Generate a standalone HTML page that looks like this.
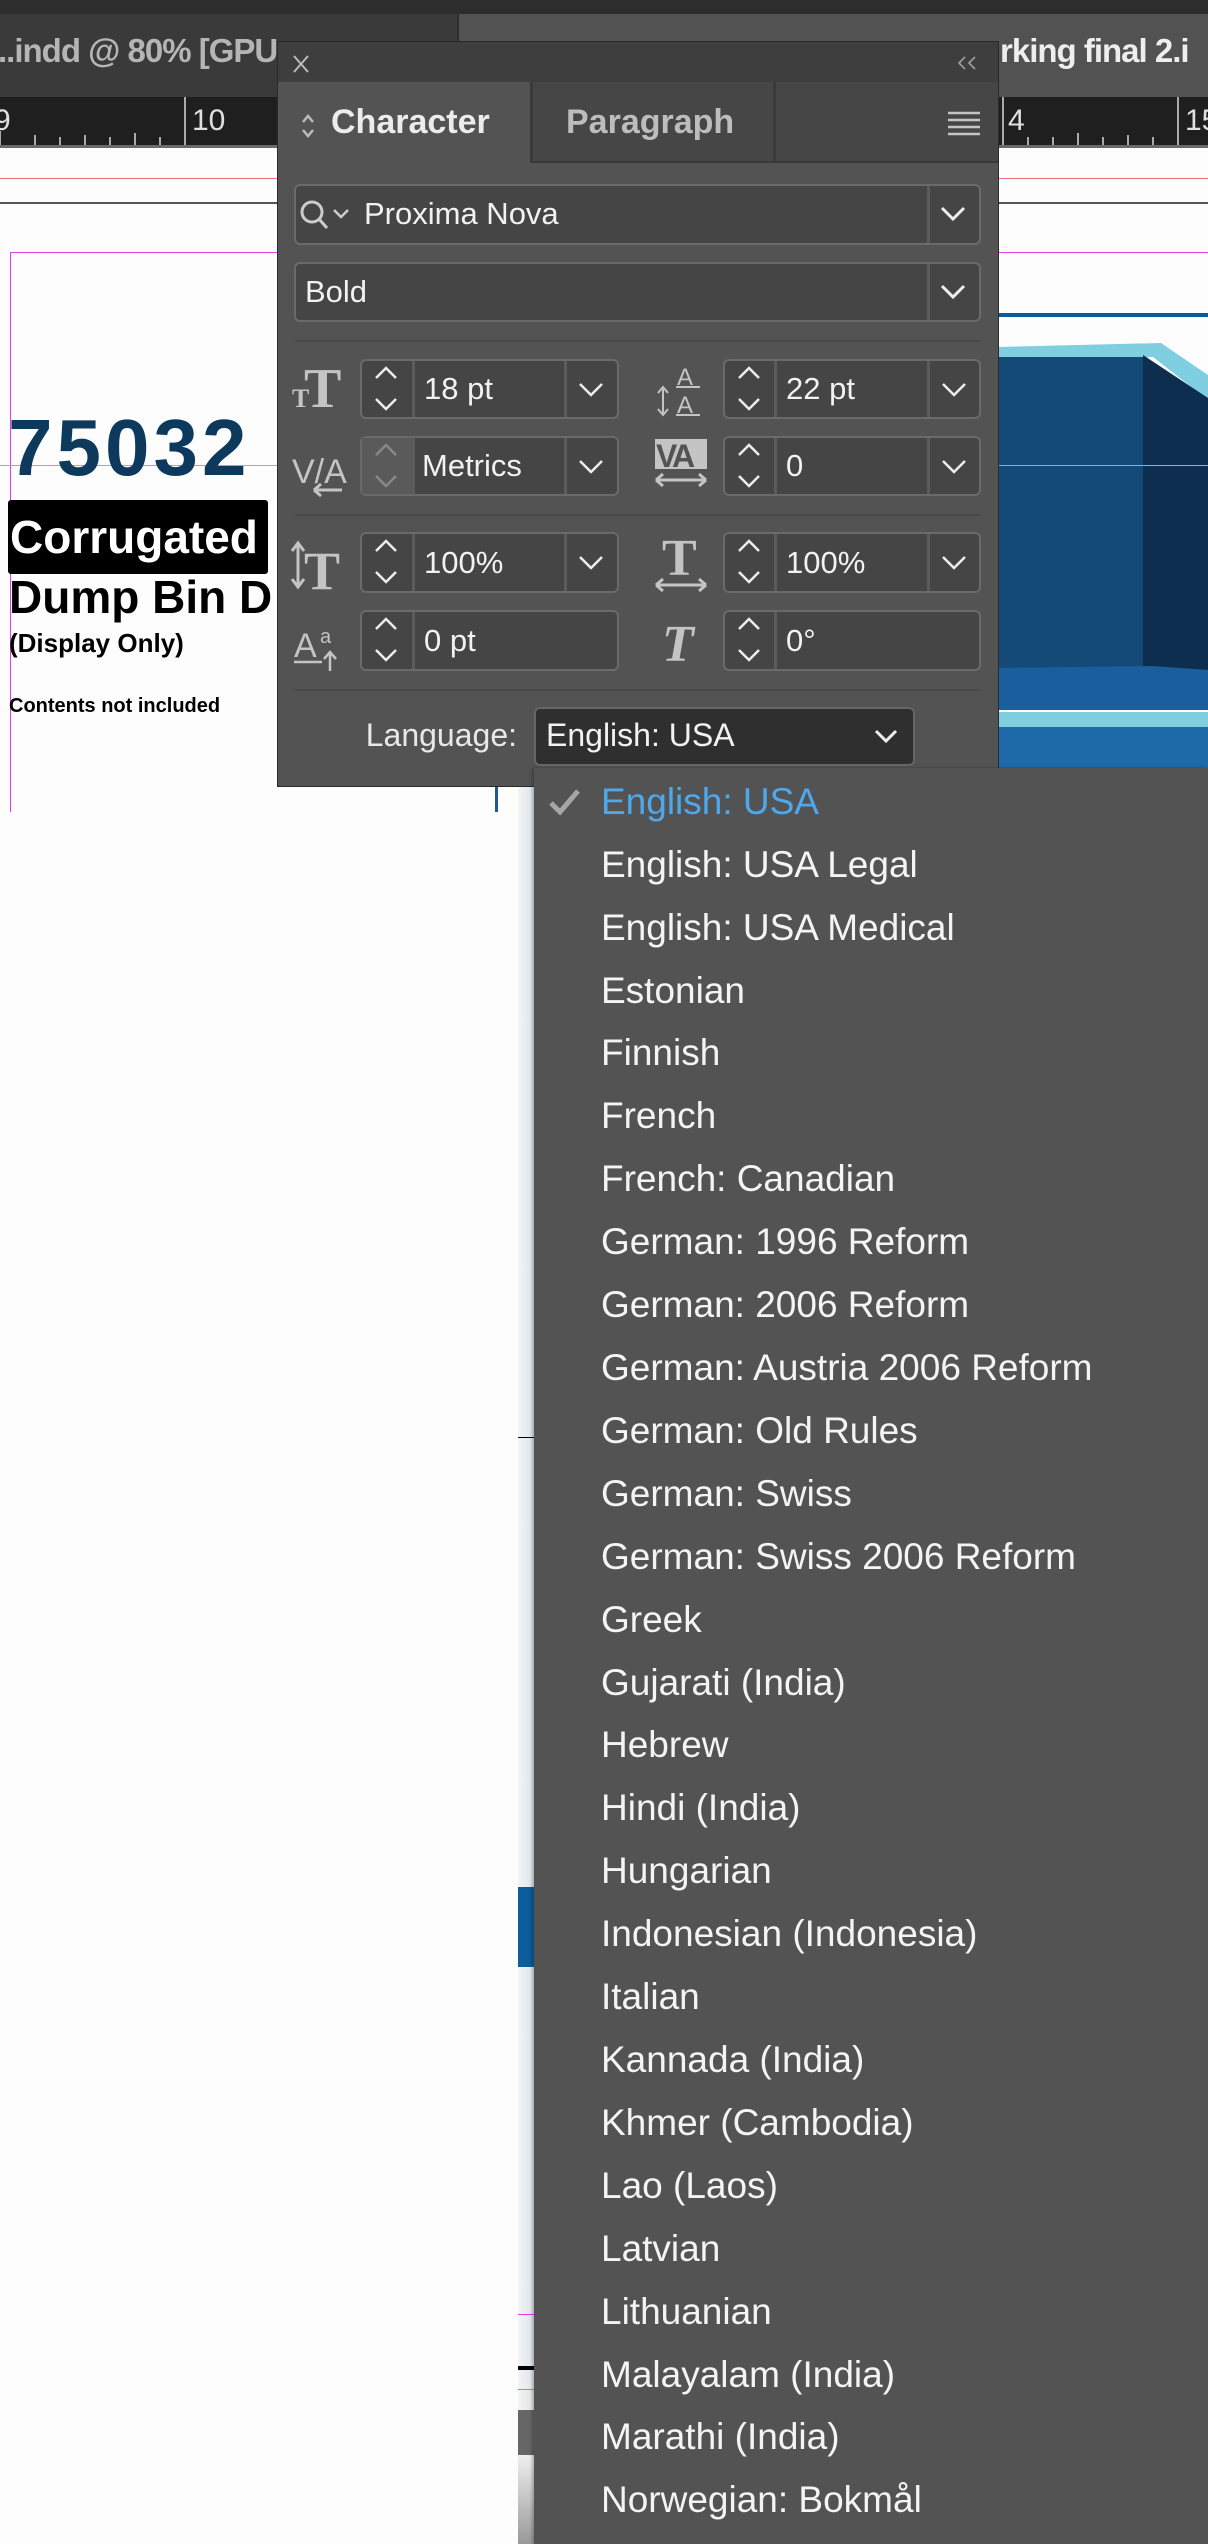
<!DOCTYPE html>
<html><head><meta charset="utf-8">
<style>
*{margin:0;padding:0;box-sizing:border-box}
body{width:1208px;height:2544px;position:relative;overflow:hidden;background:#fdfdfd;font-family:"Liberation Sans",sans-serif}
.a{position:absolute}
.fld{position:absolute;background:#454545;border:2px solid #6a6a6a;border-radius:6px}
.txt{position:absolute;color:#f2f2f2;font-size:31px;white-space:nowrap}
.div{position:absolute;top:0;bottom:0;width:3px;background:#5c5c5c}
.mi{position:absolute;left:601px;color:#f4f4f4;font-size:37px;white-space:nowrap;line-height:63px;height:63px}
</style></head><body>

<div class="a" style="left:0;top:0;width:1208px;height:14px;background:#2d2d2d"></div>
<div class="a" style="left:0;top:14px;width:457px;height:83px;background:#3a3a3a"></div>
<div class="a" style="left:457px;top:14px;width:751px;height:83px;background:#525252;border-left:2px solid #2f2f2f"></div>
<div class="a" style="left:-2px;top:32px;color:#b5b5b5;font-size:33px;font-weight:bold;white-space:nowrap;letter-spacing:-1px">..indd @ 80% [GPU</div>
<div class="a" style="left:1000px;top:32px;color:#eeeeee;font-size:33px;font-weight:bold;white-space:nowrap;letter-spacing:-1px">rking final 2.i</div>
<div class="a" style="left:0;top:97px;width:1208px;height:48px;background:#1f1f1f"></div>
<div class="a" style="left:0;top:145px;width:1208px;height:3px;background:#6a6a6a"></div>
<svg class="a" style="left:0;top:97px" width="1208" height="48">
<g stroke="#aaa" stroke-width="2">
<line x1="0" y1="34" x2="0" y2="48"/><line x1="35" y1="38" x2="35" y2="48"/><line x1="60" y1="40" x2="60" y2="48"/><line x1="85" y1="38" x2="85" y2="48"/><line x1="110" y1="40" x2="110" y2="48"/><line x1="135" y1="36" x2="135" y2="48"/><line x1="160" y1="40" x2="160" y2="48"/><line x1="185" y1="40" x2="185" y2="48"/>
<line x1="185" y1="0" x2="185" y2="48"/>
<line x1="1003" y1="0" x2="1003" y2="48"/><line x1="1028" y1="40" x2="1028" y2="48"/><line x1="1053" y1="40" x2="1053" y2="48"/><line x1="1078" y1="36" x2="1078" y2="48"/><line x1="1103" y1="40" x2="1103" y2="48"/><line x1="1128" y1="38" x2="1128" y2="48"/><line x1="1153" y1="40" x2="1153" y2="48"/><line x1="1178" y1="0" x2="1178" y2="48"/>
</g>
<text x="-6" y="33" fill="#e0e0e0" font-size="30" font-family="Liberation Sans">9</text>
<text x="192" y="33" fill="#e0e0e0" font-size="30" font-family="Liberation Sans">10</text>
<text x="1008" y="33" fill="#e0e0e0" font-size="30" font-family="Liberation Sans">4</text>
<text x="1185" y="33" fill="#e0e0e0" font-size="30" font-family="Liberation Sans">15</text>
</svg>

<div class="a" style="left:0;top:178px;width:1208px;height:1px;background:#f06a7a"></div>
<div class="a" style="left:0;top:202px;width:1208px;height:2px;background:#555"></div>
<div class="a" style="left:10px;top:252px;width:1198px;height:1px;background:#e040e0"></div>
<div class="a" style="left:10px;top:252px;width:1px;height:560px;background:#e040e0"></div>
<div class="a" style="left:0;top:465px;width:1208px;height:1px;background:#30d8e8"></div>

<svg class="a" style="left:998px;top:300px" width="210" height="470">
<rect x="0" y="0" width="210" height="470" fill="#fdfdfd"/>
<rect x="0" y="13" width="210" height="4" fill="#0d5c9c"/>
<polygon points="0,47 163,43 210,75 210,100 155,57 0,60" fill="#7fcfe0"/>
<rect x="0" y="57" width="145" height="312" fill="#134a78"/>
<polygon points="145,55 210,98 210,370 145,370" fill="#0e2e50"/>
<polygon points="0,368 155,366 210,370 210,410 0,410" fill="#1a5e9e"/>
<rect x="0" y="412" width="210" height="15" fill="#7fcfe0"/>
<rect x="0" y="427" width="210" height="43" fill="#1e6aa8"/>
<rect x="0" y="165" width="210" height="1" fill="#30d8e8"/>
</svg>

<div class="a" style="left:8px;top:402px;color:#0d3a5c;font-size:80px;font-weight:bold;letter-spacing:4px">75032</div>
<div class="a" style="left:8px;top:500px;width:260px;height:74px;background:#000;border-radius:3px"></div>
<div class="a" style="left:10px;top:510px;color:#fff;font-size:46px;font-weight:bold;white-space:nowrap">Corrugated</div>
<div class="a" style="left:9px;top:570px;color:#000;font-size:46px;font-weight:bold;white-space:nowrap">Dump Bin D</div>
<div class="a" style="left:9px;top:628px;color:#000;font-size:26px;font-weight:bold;white-space:nowrap">(Display Only)</div>
<div class="a" style="left:9px;top:695px;color:#000;font-size:20px;font-weight:bold;white-space:nowrap">Contents not included</div>
<div class="a" style="left:495px;top:768px;width:3px;height:44px;background:#1d5a9a"></div>

<div class="a" style="left:518px;top:768px;width:16px;height:1776px;background:linear-gradient(90deg,#f4f4f4,#dfe4e8)"></div>
<div class="a" style="left:518px;top:1437px;width:16px;height:1px;background:#000"></div>
<div class="a" style="left:518px;top:1887px;width:16px;height:80px;background:#0d5c9c"></div>
<div class="a" style="left:518px;top:2314px;width:16px;height:1px;background:#e040e0"></div>
<div class="a" style="left:518px;top:2366px;width:16px;height:4px;background:#000"></div>
<div class="a" style="left:518px;top:2389px;width:16px;height:1px;background:#f06a7a"></div>
<div class="a" style="left:518px;top:2410px;width:16px;height:45px;background:#666"></div>
<div class="a" style="left:518px;top:2456px;width:16px;height:88px;background:linear-gradient(#eee,#999)"></div>

<div class="a" style="left:277px;top:41px;width:722px;height:746px;background:#535353;border:1px solid #2a2a2a"></div>
<div class="a" style="left:278px;top:42px;width:720px;height:40px;background:#3e3e3e"></div>
<svg class="a" style="left:292px;top:53px" width="18" height="20"><path d="M2 3 L16 19 M16 3 L2 19" stroke="#bbb" stroke-width="2" fill="none"/></svg>
<svg class="a" style="left:956px;top:55px" width="22" height="16"><path d="M9 2 L3 8 L9 14 M19 2 L13 8 L19 14" stroke="#999" stroke-width="1.8" fill="none"/></svg>
<div class="a" style="left:278px;top:82px;width:720px;height:81px;background:#464646;border-bottom:2px solid #3a3a3a"></div>
<div class="a" style="left:278px;top:82px;width:252px;height:83px;background:#535353"></div>
<div class="a" style="left:530px;top:82px;width:3px;height:81px;background:#3a3a3a"></div>
<div class="a" style="left:773px;top:82px;width:3px;height:81px;background:#3a3a3a"></div>
<svg class="a" style="left:300px;top:110px" width="16" height="32"><path d="M3 12 L8 6 L13 12 M3 20 L8 26 L13 20" stroke="#bbb" stroke-width="2.5" fill="none"/></svg>
<div class="a" style="left:331px;top:103px;color:#ececec;font-size:34px;font-weight:bold">Character</div>
<div class="a" style="left:566px;top:103px;color:#bdbdbd;font-size:34px;font-weight:bold">Paragraph</div>
<svg class="a" style="left:948px;top:110px" width="32" height="26"><g stroke="#c4c4c4" stroke-width="2.5"><line x1="0" y1="3" x2="32" y2="3"/><line x1="0" y1="10" x2="32" y2="10"/><line x1="0" y1="17" x2="32" y2="17"/><line x1="0" y1="24" x2="32" y2="24"/></g></svg>

<div class="fld" style="left:294px;top:184px;width:687px;height:61px"><div class="div" style="left:631px"></div></div>
<svg class="a" style="left:298px;top:198px" width="60" height="36"><circle cx="14" cy="14" r="10" stroke="#ccc" stroke-width="3" fill="none"/><line x1="21" y1="21" x2="29" y2="30" stroke="#ccc" stroke-width="3"/><path d="M36 12 L43 19 L50 12" stroke="#ccc" stroke-width="2.5" fill="none"/></svg>
<div class="txt" style="left:364px;top:196px">Proxima Nova</div>
<div class="fld" style="left:294px;top:262px;width:687px;height:60px"><div class="div" style="left:631px"></div></div>
<div class="txt" style="left:305px;top:274px">Bold</div>
<svg class="a" style="left:940px;top:200px" width="26" height="140"><path d="M2 8 L13 19 L24 8 M2 86 L13 97 L24 86" stroke="#eee" stroke-width="3" fill="none"/></svg>

<div class="a" style="left:294px;top:340px;width:687px;height:2px;background:#4a4a4a"></div>
<div class="a" style="left:294px;top:514px;width:687px;height:2px;background:#4a4a4a"></div>
<div class="a" style="left:294px;top:689px;width:687px;height:2px;background:#4a4a4a"></div>

<div class="fld" style="left:360px;top:359px;width:259px;height:60px"><div class="div" style="left:50px"></div><div class="div" style="left:202px"></div></div>
<div class="fld" style="left:723px;top:359px;width:258px;height:60px"><div class="div" style="left:49px"></div><div class="div" style="left:202px"></div></div>
<div class="txt" style="left:424px;top:371px">18 pt</div>
<div class="txt" style="left:786px;top:371px">22 pt</div>
<div class="fld" style="left:360px;top:436px;width:259px;height:60px"><div class="a" style="left:0;top:0;width:50px;height:56px;background:#5a5a5a"></div><div class="div" style="left:50px"></div><div class="div" style="left:202px"></div></div>
<div class="fld" style="left:723px;top:436px;width:258px;height:60px"><div class="div" style="left:49px"></div><div class="div" style="left:202px"></div></div>
<div class="txt" style="left:422px;top:448px">Metrics</div>
<div class="txt" style="left:786px;top:448px">0</div>
<div class="fld" style="left:360px;top:532px;width:259px;height:61px"><div class="div" style="left:50px"></div><div class="div" style="left:202px"></div></div>
<div class="fld" style="left:723px;top:532px;width:258px;height:61px"><div class="div" style="left:49px"></div><div class="div" style="left:202px"></div></div>
<div class="txt" style="left:424px;top:545px">100%</div>
<div class="txt" style="left:786px;top:545px">100%</div>
<div class="fld" style="left:360px;top:610px;width:259px;height:61px"><div class="div" style="left:50px"></div></div>
<div class="fld" style="left:723px;top:610px;width:258px;height:61px"><div class="div" style="left:49px"></div></div>
<div class="txt" style="left:424px;top:623px">0 pt</div>
<div class="txt" style="left:786px;top:623px">0°</div>

<svg class="a" style="left:360px;top:355px" width="630" height="330">
<g stroke="#eee" stroke-width="2.5" fill="none">
<path d="M16 23 L26 13 L36 23 M16 44 L26 54 L36 44"/>
<path d="M16 196 L26 186 L36 196 M16 217 L26 227 L36 217"/>
<path d="M16 274 L26 264 L36 274 M16 295 L26 305 L36 295"/>
<path d="M379 23 L389 13 L399 23 M379 44 L389 54 L399 44"/>
<path d="M379 100 L389 90 L399 100 M379 121 L389 131 L399 121"/>
<path d="M379 196 L389 186 L399 196 M379 217 L389 227 L399 217"/>
<path d="M379 274 L389 264 L399 274 M379 295 L389 305 L399 295"/>
<path d="M220 29 L231 40 L242 29 M220 106 L231 117 L242 106 M220 202 L231 213 L242 202"/>
<path d="M583 29 L594 40 L605 29 M583 106 L594 117 L605 106 M583 202 L594 213 L605 202"/>
</g>
<path d="M16 100 L26 90 L36 100 M16 121 L26 131 L36 121" stroke="#888" stroke-width="2.5" fill="none"/>
</svg>

<svg class="a" style="left:290px;top:355px" width="420" height="320" font-family="Liberation Serif" font-weight="bold" fill="#c4c4c4">
<text x="2" y="52" font-size="26">T</text><text x="14" y="52" font-size="56">T</text>
<text x="2" y="128" font-size="34" font-family="Liberation Sans" font-weight="normal">V/A</text>
<path d="M24 135 L52 135 M24 135 L31 129 M24 135 L31 141" stroke="#c4c4c4" stroke-width="3" fill="none"/>
<path d="M8 190 L8 230 M2 196 L8 188 L14 196 M2 224 L8 232 L14 224" stroke="#c4c4c4" stroke-width="3" fill="none"/>
<text x="14" y="234" font-size="54">T</text>
<text x="4" y="302" font-size="34" font-family="Liberation Sans" font-weight="normal">A</text>
<text x="30" y="288" font-size="20" font-family="Liberation Sans" font-weight="normal">a</text>
<path d="M4 307 L32 307 M40 316 L40 298 M34 304 L40 297 L46 304" stroke="#c4c4c4" stroke-width="2.5" fill="none"/>
<text x="387" y="30" font-size="24" font-family="Liberation Sans" font-weight="normal">A</text>
<text x="387" y="58" font-size="24" font-family="Liberation Sans" font-weight="normal">A</text>
<path d="M386 32 L410 32 M386 60 L410 60 M373 34 L373 58 M368 38 L373 32 L378 38 M368 54 L373 60 L378 54" stroke="#c4c4c4" stroke-width="2" fill="none"/>
<rect x="365" y="84" width="52" height="30" fill="#c4c4c4"/>
<text x="366" y="112" font-size="32" font-family="Liberation Sans" fill="#535353" letter-spacing="-3">VA</text>
<path d="M366 125 L416 125 M366 125 L373 119 M366 125 L373 131 M416 125 L409 119 M416 125 L409 131" stroke="#c4c4c4" stroke-width="3" fill="none"/>
<text x="372" y="220" font-size="52">T</text>
<path d="M366 230 L416 230 M366 230 L373 224 M366 230 L373 236 M416 230 L409 224 M416 230 L409 236" stroke="#c4c4c4" stroke-width="3" fill="none"/>
<text x="372" y="306" font-size="52" font-style="italic">T</text>
</svg>

<div class="a" style="left:357px;top:717px;color:#e8e8e8;font-size:32px;width:160px;text-align:right;white-space:nowrap">Language:</div>
<div class="a" style="left:534px;top:707px;width:381px;height:59px;background:#2f2f2f;border:2px solid #666;border-radius:6px"></div>
<div class="txt" style="left:546px;top:717px;font-size:32px">English: USA</div>
<svg class="a" style="left:874px;top:728px" width="24" height="16"><path d="M2 3 L12 13 L22 3" stroke="#eee" stroke-width="3" fill="none"/></svg>

<div class="a" style="left:534px;top:768px;width:674px;height:1776px;background:#535353;box-shadow:-2px 0 3px rgba(0,0,0,0.25)"></div>
<svg class="a" style="left:548px;top:788px" width="34" height="28"><path d="M3 15 L12 24 L30 3" stroke="#a6a6a6" stroke-width="5" fill="none"/></svg>
<div class="mi" style="top:770px;color:#4ea8ec">English: USA</div>
<div class="mi" style="top:833px">English: USA Legal</div>
<div class="mi" style="top:896px">English: USA Medical</div>
<div class="mi" style="top:959px">Estonian</div>
<div class="mi" style="top:1021px">Finnish</div>
<div class="mi" style="top:1084px">French</div>
<div class="mi" style="top:1147px">French: Canadian</div>
<div class="mi" style="top:1210px">German: 1996 Reform</div>
<div class="mi" style="top:1273px">German: 2006 Reform</div>
<div class="mi" style="top:1336px">German: Austria 2006 Reform</div>
<div class="mi" style="top:1399px">German: Old Rules</div>
<div class="mi" style="top:1462px">German: Swiss</div>
<div class="mi" style="top:1525px">German: Swiss 2006 Reform</div>
<div class="mi" style="top:1588px">Greek</div>
<div class="mi" style="top:1651px">Gujarati (India)</div>
<div class="mi" style="top:1713px">Hebrew</div>
<div class="mi" style="top:1776px">Hindi (India)</div>
<div class="mi" style="top:1839px">Hungarian</div>
<div class="mi" style="top:1902px">Indonesian (Indonesia)</div>
<div class="mi" style="top:1965px">Italian</div>
<div class="mi" style="top:2028px">Kannada (India)</div>
<div class="mi" style="top:2091px">Khmer (Cambodia)</div>
<div class="mi" style="top:2154px">Lao (Laos)</div>
<div class="mi" style="top:2217px">Latvian</div>
<div class="mi" style="top:2280px">Lithuanian</div>
<div class="mi" style="top:2343px">Malayalam (India)</div>
<div class="mi" style="top:2405px">Marathi (India)</div>
<div class="mi" style="top:2468px">Norwegian: Bokmål</div>

</body></html>
